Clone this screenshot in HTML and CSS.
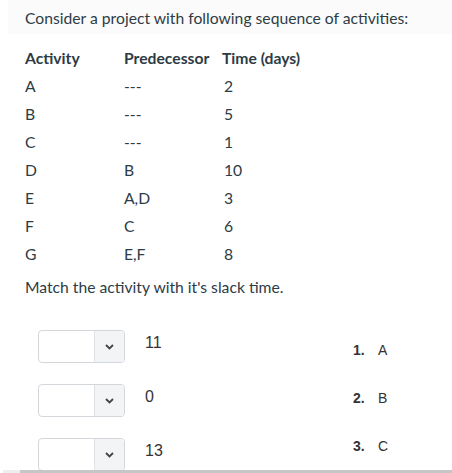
FILE: index.html
```html
<!DOCTYPE html>
<html>
<head>
<meta charset="utf-8">
<link rel="stylesheet" href="styles.css">
</head>
<body>
<div class="page">
  <div class="title">Consider a project with following sequence of activities:</div>
  <div class="table">
    <div class="cell head">Activity</div><div class="cell head">Predecessor</div><div class="cell head">Time (days)</div>
    <div class="cell">A</div><div class="cell">---</div><div class="cell num">2</div>
    <div class="cell">B</div><div class="cell">---</div><div class="cell num">5</div>
    <div class="cell">C</div><div class="cell">---</div><div class="cell num">1</div>
    <div class="cell">D</div><div class="cell">B</div><div class="cell num">10</div>
    <div class="cell">E</div><div class="cell">A,D</div><div class="cell num">3</div>
    <div class="cell">F</div><div class="cell">C</div><div class="cell num">6</div>
    <div class="cell">G</div><div class="cell">E,F</div><div class="cell num">8</div>
  </div>
  <div class="prompt">Match the activity with it's slack time.</div>
  <div class="match">
    <div class="answers">
      <div class="answer">
        <div class="select"><div class="field"></div><div class="arrow"><svg width="9" height="6" viewBox="0 0 9 6"><polyline points="1,1 4.5,4.5 8,1" fill="none" stroke="#444" stroke-width="1.8"/></svg></div></div>
        <div class="label">11</div>
      </div>
      <div class="answer">
        <div class="select"><div class="field"></div><div class="arrow"><svg width="9" height="6" viewBox="0 0 9 6"><polyline points="1,1 4.5,4.5 8,1" fill="none" stroke="#444" stroke-width="1.8"/></svg></div></div>
        <div class="label">0</div>
      </div>
      <div class="answer">
        <div class="select"><div class="field"></div><div class="arrow"><svg width="9" height="6" viewBox="0 0 9 6"><polyline points="1,1 4.5,4.5 8,1" fill="none" stroke="#444" stroke-width="1.8"/></svg></div></div>
        <div class="label">13</div>
      </div>
    </div>
    <ol class="items">
      <li><span class="n">1.</span><span>A</span></li>
      <li><span class="n">2.</span><span>B</span></li>
      <li><span class="n">3.</span><span>C</span></li>
    </ol>
  </div>
</div>
<div class="scrollbar"><div class="track"></div><div class="thumb"></div></div>
</body>
</html>
```
FILE: styles.css
```css
html, body {
  margin: 0;
  padding: 0;
  background: #fff;
  overflow: hidden;
}
.page {
  font-family: Lato, "Open Sans", sans-serif;
  font-size: 15.7px;
  color: #2d3b45;
  padding-top: 4px;
}
.title {
  margin-left: 8px;
  padding-left: 17px;
  line-height: 28px;
  background: #fbfbfb;
  padding-bottom: 2px;
  margin-top: -4px;
  padding-top: 4px;
}
.table {
  display: grid;
  grid-template-columns: 99px 98px auto;
  margin-top: 10px;
  padding-left: 25px;
}
.cell {
  line-height: 28px;
  height: 28px;
}
.head {
  font-weight: bold;
}
.num {
  padding-left: 2px;
}
.prompt {
  padding-left: 25px;
  line-height: 28px;
  margin-top: 5px;
}
.match {
  display: flex;
  margin-top: 29px;
  font-family: "Liberation Sans", Arial, sans-serif;
  font-size: 14px;
  color: #333;
}
.answers {
  display: flex;
  flex-direction: column;
  gap: 21px;
  padding-left: 38px;
  width: 315px;
}
.answer {
  display: flex;
  align-items: flex-start;
  gap: 20px;
}
.select {
  display: flex;
  width: 85px;
  height: 31px;
  border: 1px solid #d3d7dc;
  border-radius: 4px;
  overflow: hidden;
  background: #fff;
}
.field {
  width: 55px;
}
.arrow {
  flex: 1;
  border-left: 1px solid #dfe2e6;
  background: #f3f4f6;
  display: flex;
  align-items: center;
  justify-content: center;
}
.arrow svg {
  display: block;
}
.label {
  font-size: 16px;
  line-height: 20px;
  padding-top: 3px;
}
.items {
  list-style: none;
  margin: 0;
  padding: 10px 0 0 0;
}
.items li {
  height: 48px;
  line-height: 20px;
  display: flex;
}
.items .n {
  font-weight: bold;
  width: 25px;
}
.scrollbar {
  position: fixed;
  left: 3px;
  right: 0;
  bottom: 0;
  height: 3px;
  display: flex;
}
.track {
  width: 17px;
  background: #eeeeee;
}
.thumb {
  flex: 1;
  background: #c6c6c6;
}
```
